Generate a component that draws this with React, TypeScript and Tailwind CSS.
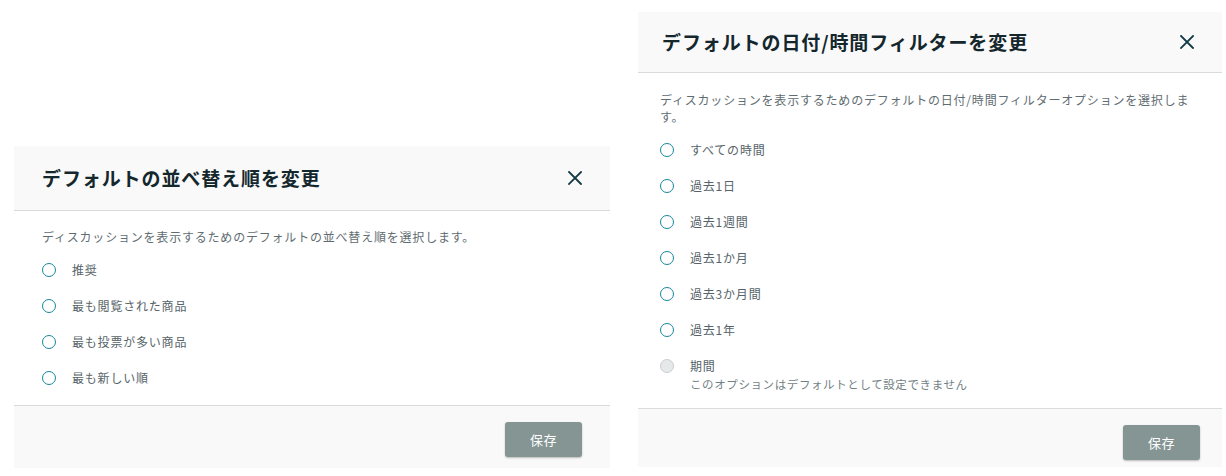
import React from 'react';

const font = { fontFamily: '"Noto Sans CJK JP", "Noto Sans", sans-serif' };

type Option = { label: string; disabled?: boolean; note?: string };

const sortOptions: Option[] = [
  { label: '推奨' },
  { label: '最も閲覧された商品' },
  { label: '最も投票が多い商品' },
  { label: '最も新しい順' },
];

const dateOptions: Option[] = [
  { label: 'すべての時間' },
  { label: '過去1日' },
  { label: '過去1週間' },
  { label: '過去1か月' },
  { label: '過去3か月間' },
  { label: '過去1年' },
  { label: '期間', disabled: true, note: 'このオプションはデフォルトとして設定できません' },
];

const CloseIcon: React.FC = () => (
  <svg width="14" height="14" viewBox="0 0 14 14" className="text-[#123a44]">
    <path d="M1 1 L13 13 M13 1 L1 13" stroke="currentColor" strokeWidth="1.8" strokeLinecap="square" />
  </svg>
);

const RadioRow: React.FC<{ option: Option }> = ({ option }) => (
  <div className={option.note ? 'flex items-start pt-[11px]' : 'flex items-start h-[36px] pt-[11px]'}>
    {/* 丸いラジオボタン */}
    <span
      className={
        option.disabled
          ? 'mt-px w-[14px] h-[14px] shrink-0 rounded-full border border-[#c9cece] bg-[#e6e9e9]'
          : 'mt-px w-[14px] h-[14px] shrink-0 rounded-full border-[1.5px] border-[#17879b] bg-white'
      }
    />
    <div className="ml-[16px]">
      <div className="text-[12px] leading-[16px] tracking-[0.8px] text-[#566469]">{option.label}</div>
      {option.note && (
        <div className="mt-[2px] text-[11.5px] leading-[16px] tracking-[0.6px] text-[#727f84]">{option.note}</div>
      )}
    </div>
  </div>
);

const SaveButton: React.FC = () => (
  <button className="w-[77px] h-[35px] rounded-[3px] bg-[#849594] text-white text-[13px] tracking-[0.5px] shadow-[0_1px_2px_rgba(0,0,0,0.25)]">
    保存
  </button>
);

const App: React.FC = () => {
  return (
    <div className="w-[1226px] h-[476px] bg-white flex items-start pl-[14px]" style={font}>
      {/* 左：並べ替え順ダイアログ */}
      <div className="w-[596px] mt-[146px] flex flex-col">
        <div className="h-[65px] px-[28px] flex items-center justify-between bg-[#f9f9f9] border-b border-[#d8dcdc]">
          <h2 className="text-[19px] font-bold tracking-[0.9px] text-[#14272d]">デフォルトの並べ替え順を変更</h2>
          <CloseIcon />
        </div>
        <div className="px-[28px] pt-[17px] pb-[10px]">
          <p className="text-[12px] leading-[18px] tracking-[0.8px] text-[#5f6d72] mb-[5px]">
            ディスカッションを表示するためのデフォルトの並べ替え順を選択します。
          </p>
          {sortOptions.map((o) => (
            <RadioRow key={o.label} option={o} />
          ))}
        </div>
        <div className="h-[63px] pt-[16px] pr-[28px] flex justify-end items-start bg-[#f9f9f9] border-t border-[#d8dcdc]">
          <SaveButton />
        </div>
      </div>

      {/* 右：日付/時間フィルターダイアログ */}
      <div className="w-[584px] ml-[28px] mt-[12px] flex flex-col">
        <div className="h-[61px] pl-[24px] pr-[28px] flex items-center justify-between bg-[#f9f9f9] border-b border-[#d8dcdc]">
          <h2 className="text-[19px] font-bold tracking-[0.9px] text-[#14272d]">デフォルトの日付/時間フィルターを変更</h2>
          <CloseIcon />
        </div>
        <div className="pl-[22px] pr-[12px] pt-[18px] pb-[16px]">
          <p className="text-[12px] leading-[17px] tracking-[0.8px] text-[#5f6d72] mb-[6px]">
            ディスカッションを表示するためのデフォルトの日付/時間フィルターオプションを選択します。
          </p>
          {dateOptions.map((o) => (
            <RadioRow key={o.label} option={o} />
          ))}
        </div>
        <div className="h-[59px] pt-[16px] pr-[22px] flex justify-end items-start bg-[#f9f9f9] border-t border-[#d8dcdc]">
          <SaveButton />
        </div>
      </div>
    </div>
  );
};

export default App;
